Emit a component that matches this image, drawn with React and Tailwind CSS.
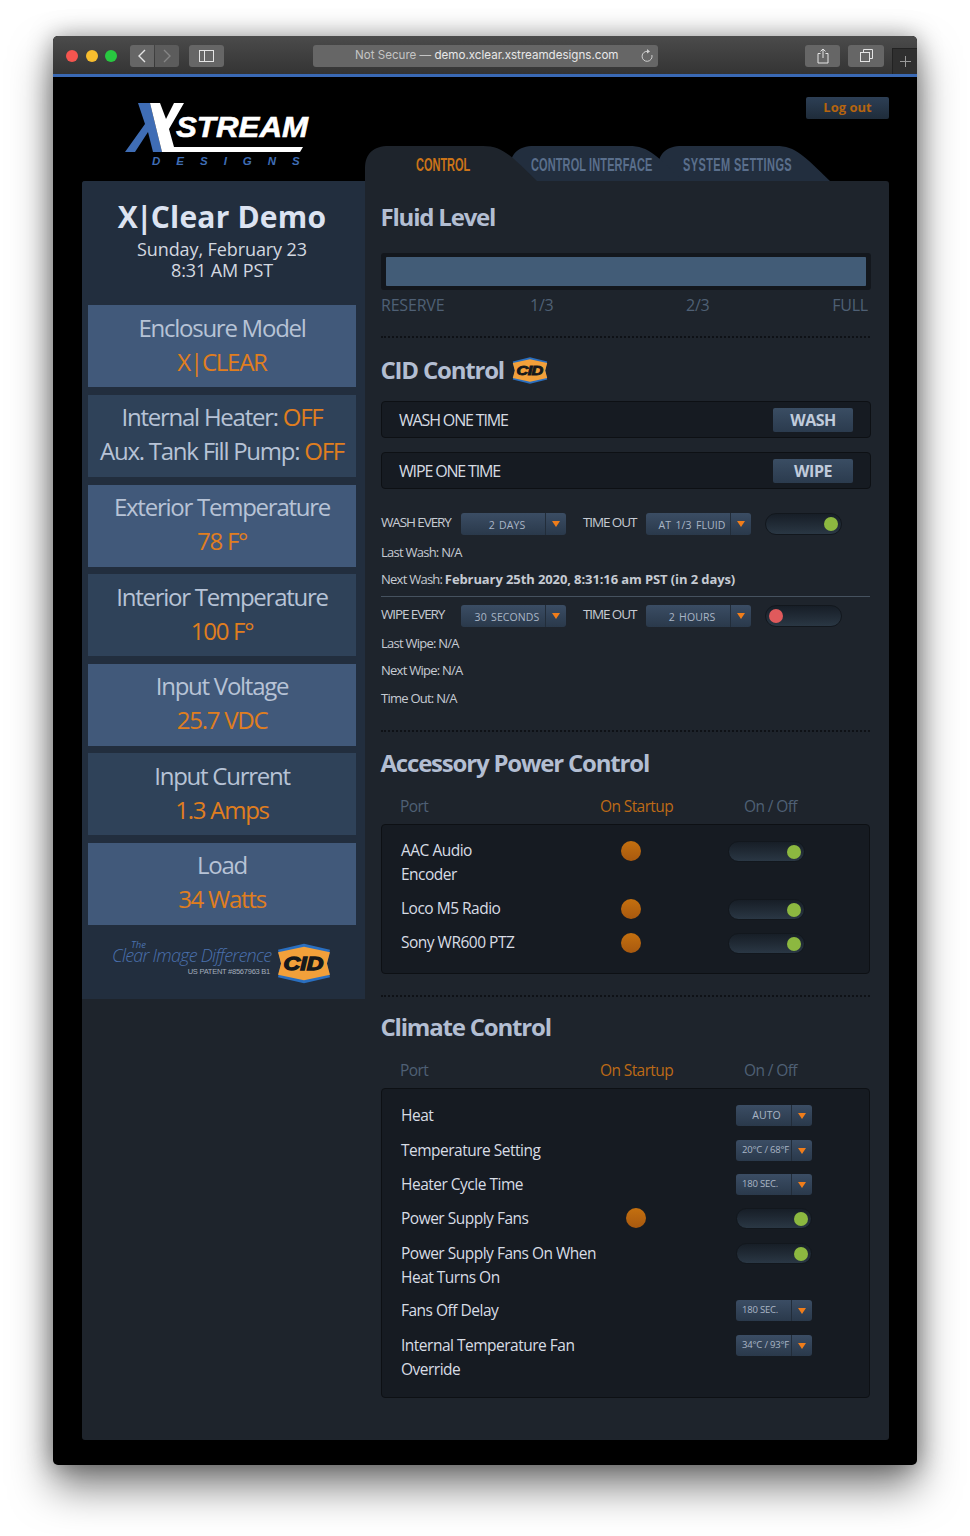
import React from 'react';

// little orange CID badge, used in the heading and in the sidebar footer
function CidBadge({ className }) {
  return (
    <svg viewBox="0 0 106 80" className={className}>
      <path d="M2 13 L53 1 L104 13 L98 40 L104 67 L53 79 L2 67 L8 40 Z" fill="#2a6fc0" />
      <path d="M2 18 L53 7 L104 18 L98 40 L104 62 L53 73 L2 62 L8 40 Z" fill="#f2a03a" />
      <text x="52" y="53" textAnchor="middle" fontFamily="'Liberation Sans',sans-serif" fontWeight="700" fontStyle="italic" fontSize="36" fill="#15181c" stroke="#15181c" strokeWidth="2.5" textLength="78" lengthAdjust="spacingAndGlyphs">CID</text>
    </svg>
  );
}

function Logo() {
  return (
    <svg width="200" height="68" viewBox="0 0 200 68" className="block">
      <path d="M14 1 L26 1 L38 50 L29 50 L24 30 L11 50 L1 50 L21 22 Z" fill="#3f6db5" />
      <path d="M26 1 L36 1 L42 17 L50 1 L60 1 L45 27 L50 45 L179 45 L176 50 L38 50 Z" fill="#ffffff" />
      <text x="52" y="35" fontFamily="'Liberation Sans',sans-serif" fontWeight="700" fontStyle="italic" fontSize="30" fill="#ffffff" stroke="#ffffff" strokeWidth="0.6" textLength="132" lengthAdjust="spacingAndGlyphs">STREAM</text>
      <text x="28" y="63" fontFamily="'Liberation Sans',sans-serif" fontWeight="700" fontStyle="italic" fontSize="11.5" fill="#3f6db5" letterSpacing="16">DESIGNS</text>
    </svg>
  );
}

function Chrome() {
  return (
    <div className="relative h-[38px] shrink-0 bg-gradient-to-b from-[#4b4b4b] to-[#343434] rounded-t-[5px] flex items-center">
      <div className="ml-[13px] flex gap-[7.5px] mt-[1px]">
        <div className="w-3 h-3 rounded-full bg-[#f5554f]" />
        <div className="w-3 h-3 rounded-full bg-[#f7bd2e]" />
        <div className="w-3 h-3 rounded-full bg-[#28c840]" />
      </div>
      <div className="ml-[13px] flex gap-[1px] mt-[1px]">
        <div className="w-6 h-[22px] rounded-l-[3px] bg-[#666666] flex items-center justify-center">
          <svg width="10" height="14" viewBox="0 0 10 14" fill="none" stroke="#e4e4e4" strokeWidth="1.4"><path d="M8 1 L2 7 L8 13" /></svg>
        </div>
        <div className="w-6 h-[22px] rounded-r-[3px] bg-[#5c5c5c] flex items-center justify-center">
          <svg width="10" height="14" viewBox="0 0 10 14" fill="none" stroke="#858585" strokeWidth="1.4"><path d="M2 1 L8 7 L2 13" /></svg>
        </div>
      </div>
      <div className="ml-[10px] w-[35px] h-[22px] mt-[1px] rounded-[3px] bg-[#666666] flex items-center justify-center">
        <svg width="16" height="12" viewBox="0 0 16 12" fill="none" stroke="#e4e4e4"><rect x="0.5" y="0.5" width="14" height="11" /><path d="M5.5 0.5 V11.5" /></svg>
      </div>
      <div className="ml-[89px] w-[345px] h-[22px] mt-[1px] rounded-[3px] bg-[#666666] flex items-center relative">
        <span className="ml-[42px] mt-[1px] text-[11.6px] text-[#c4c4c4] font-['Inter',sans-serif] whitespace-nowrap">
          Not Secure — <span className="text-[#e8e8e8]">demo.xclear.xstreamdesigns.com</span>
        </span>
        <svg width="14" height="14" viewBox="0 0 14 14" fill="none" stroke="#d0d0d0" strokeWidth="1" className="absolute right-[4px] top-[4px]">
          <path d="M8 2.4 A5 5 0 1 0 11.9 6" /><path d="M7 0 L10 2.4 L7 4.6 Z" fill="#d0d0d0" stroke="none" />
        </svg>
      </div>
      <div className="ml-[147px] w-[35px] h-[22px] mt-[1px] rounded-[3px] bg-[#666666] flex items-center justify-center">
        <svg width="12" height="16" viewBox="0 0 12 16" fill="none" stroke="#e4e4e4"><path d="M3.5 5.5 H1 V15 H11 V5.5 H8.5" /><path d="M6 10 V1 M3.5 3.4 L6 1 L8.5 3.4" /></svg>
      </div>
      <div className="ml-[8px] w-[36px] h-[22px] mt-[1px] rounded-[3px] bg-[#666666] flex items-center justify-center">
        <svg width="13" height="13" viewBox="0 0 13 13" fill="none" stroke="#e4e4e4"><rect x="0.5" y="3.5" width="9" height="9" /><path d="M3.5 3.5 V0.5 H12.5 V9.5 H9.5" /></svg>
      </div>
      <div className="absolute right-0 bottom-0 w-[25px] h-[26px] bg-[#2f2f2f] border-l border-t border-[#222222] flex items-center justify-center">
        <svg width="11" height="11" viewBox="0 0 11 11" stroke="#9a9a9a"><path d="M5.5 0 V11 M0 5.5 H11" /></svg>
      </div>
    </div>
  );
}

function Tab({ w, fill, label, color, pl, z, className = '' }) {
  return (
    <div className={`relative h-[35px] ${z} ${className}`} style={{ width: w }}>
      <svg width={w} height="35" viewBox={`0 0 ${w} 35`} className="absolute inset-0">
        <path d={`M0 35 V22 C0 8 8 0 24 0 H${w - 54} C${w - 34} 0 ${w - 26} 10 ${w} 35 Z`} fill={fill} />
      </svg>
      <span
        className={`absolute top-[9px] origin-left scale-x-[0.61] font-['Liberation_Sans',sans-serif] font-bold text-[18px] leading-5 whitespace-nowrap ${color}`}
        style={{ left: pl }}
      >
        {label}
      </span>
    </div>
  );
}

function StatCard({ tone, children }) {
  return (
    <div className={`h-[82px] pb-[3px] flex flex-col items-center justify-center text-[24px] font-medium leading-[34px] tracking-[-1.25px] text-[#b7c3d6] whitespace-nowrap ${tone}`}>
      {children}
    </div>
  );
}

const LIGHT = 'bg-[#41597a]';
const DARK = 'bg-[#2f4259]';

function Sidebar() {
  return (
    <div className="w-[283px] h-[818px] bg-[#222e3e] rounded-tl-[3px] pl-[6px] pr-[9px] shrink-0">
      <div className="h-[124.4px] pt-[19px] text-center">
        <div className="text-[30px] leading-[34px] font-bold tracking-[0.2px] text-[#dce3f1]">X<span className="-mx-[2px]">|</span>Clear Demo</div>
        <div className="text-[18px] leading-[21px] mt-[5px] text-[#d3d8e0] tracking-[-0.1px]">Sunday, February 23</div>
        <div className="text-[18px] leading-[20px] text-[#d3d8e0] tracking-[-0.1px]">8:31 AM PST</div>
      </div>
      <div className="flex flex-col gap-[7.6px]">
        <StatCard tone={LIGHT}>
          <div>Enclosure Model</div>
          <div className="text-[#e07e1e]">X|CLEAR</div>
        </StatCard>
        <StatCard tone={DARK}>
          <div>Internal Heater: <span className="text-[#e07e1e]">OFF</span></div>
          <div>Aux. Tank Fill Pump: <span className="text-[#e07e1e]">OFF</span></div>
        </StatCard>
        <StatCard tone={LIGHT}>
          <div>Exterior Temperature</div>
          <div className="text-[#e07e1e]">78 F°</div>
        </StatCard>
        <StatCard tone={DARK}>
          <div>Interior Temperature</div>
          <div className="text-[#e07e1e]">100 F°</div>
        </StatCard>
        <StatCard tone={LIGHT}>
          <div>Input Voltage</div>
          <div className="text-[#e07e1e]">25.7 VDC</div>
        </StatCard>
        <StatCard tone={DARK}>
          <div>Input Current</div>
          <div className="text-[#e07e1e]">1.3 Amps</div>
        </StatCard>
        <StatCard tone={LIGHT}>
          <div>Load</div>
          <div className="text-[#e07e1e]">34 Watts</div>
        </StatCard>
      </div>
      <div className="mt-[16px] ml-[24px] flex items-start">
        <div className="w-[160px]">
          <div className="text-[9.5px] leading-[8px] italic text-[#4a70ad] pl-[19px]">The</div>
          <div className="text-[18px] leading-[12px] italic font-light tracking-[-0.75px] text-[#4a70ad] whitespace-nowrap">Clear Image Difference</div>
          <div className="text-[7.5px] leading-[10px] mt-[6px] pr-[2px] tracking-[-0.25px] text-right text-[#a3adbc] font-['Liberation_Sans',sans-serif] whitespace-nowrap">US PATENT #8567963 B1</div>
        </div>
        <CidBadge className="w-[54px] h-[41px] ml-[5px] mt-[2px]" />
      </div>
    </div>
  );
}

function SectionTitle({ children }) {
  return <h2 className="h-[34px] -ml-[0.5px] flex items-center text-[24px] font-bold tracking-[-1.2px] text-[#b3bed2] whitespace-nowrap">{children}</h2>;
}

function Dots({ className }) {
  return <div className={`border-t-2 border-dotted border-[#0e1116] ${className}`} />;
}

function ActionRow({ label, action, className = '' }) {
  return (
    <div className={`h-[37px] flex items-center justify-between bg-[#161b22] border border-[#0d1014] rounded-[4px] pl-[17px] pr-[17px] ${className}`}>
      <span className="text-[16px] tracking-[-1.15px] text-[#d6dbe3]">{label}</span>
      <div className="w-[80px] h-[24px] rounded-[2px] bg-gradient-to-b from-[#3a4d63] to-[#2b3b4e] flex items-center justify-center text-[16px] font-bold tracking-[-0.5px] text-[#c0cbdb]">{action}</div>
    </div>
  );
}

function Select({ value, w = 105, small, left, tall, pad = 'pl-[8px]' }) {
  return (
    <div className={`flex rounded-[3px] bg-gradient-to-b from-[#3b4d64] to-[#2a394b] shrink-0 tracking-normal ${tall ? 'h-[22px]' : 'h-[21px]'}`} style={{ width: w }}>
      <div
        className={`flex-1 flex items-center whitespace-nowrap text-[#aab6c6] ${small ? 'text-[9.5px] tracking-[-0.2px]' : 'text-[10.5px] tracking-[0.1px] [word-spacing:1.5px]'} ${left ? 'justify-start pl-[6px]' : `justify-center ${pad}`} ${tall ? 'pt-[3px]' : ''}`}
      >
        {value}
      </div>
      <div className="w-[21px] border-l border-[#222d3a] flex items-center justify-center">
        <div className="w-0 h-0 border-l-[4px] border-r-[4px] border-t-[6px] border-l-transparent border-r-transparent border-t-[#f07d1a]" />
      </div>
    </div>
  );
}

function Toggle({ on = true, w = 77, tall, className = '' }) {
  return (
    <div
      className={`rounded-full bg-gradient-to-b from-[#171e27] to-[#2a3744] border border-[#12171d] flex items-center px-[3px] shrink-0 ${tall ? 'h-[22px]' : 'h-[21px]'} ${on ? 'justify-end' : 'justify-start'} ${className}`}
      style={{ width: w }}
    >
      <div className={`w-[14px] h-[14px] rounded-full ${on ? 'bg-[#8cb840]' : 'bg-[#e05a5c]'}`} />
    </div>
  );
}

function StartupDot({ className }) {
  return <div className={`w-[20px] h-[20px] rounded-full bg-gradient-to-b from-[#c4700f] to-[#a8590f] shrink-0 ${className}`} />;
}

function Note({ className, children }) {
  return <div className={`h-[20px] flex items-center text-[13px] tracking-[-0.75px] text-[#c6cbd3] whitespace-nowrap ${className}`}>{children}</div>;
}

function ScheduleRow({ label, sel, out, on, className = '' }) {
  return (
    <div className={`h-[22px] flex items-center text-[13.5px] tracking-[-1.1px] text-[#c6cbd3] ${className}`}>
      <span className="w-[80px] -mt-[3px] whitespace-nowrap">{label}</span>
      <Select value={sel} tall />
      <span className="ml-[17px] w-[63px] -mt-[3px] whitespace-nowrap">TIME OUT</span>
      <Select value={out} tall />
      <Toggle on={on} tall className="ml-[14px]" />
    </div>
  );
}

function PortHeader({ className }) {
  return (
    <div className={`h-[20px] flex items-center text-[15.5px] tracking-[-0.6px] text-[#4f6075] ${className}`}>
      <span className="ml-[19px] w-[200px]">Port</span>
      <span className="w-[144px] text-[#bd6a16]">On Startup</span>
      <span>On / Off</span>
    </div>
  );
}

const rowText = 'text-[15.5px] font-medium leading-[24px] tracking-[-0.5px] text-[#d8dde5]';

function AccessoryRow({ label, className = '' }) {
  return (
    <div className={`flex items-start ${className}`}>
      <div className={`w-[220px] ${rowText}`}>{label}</div>
      <StartupDot className="mt-[3px]" />
      <Toggle className="ml-[87px] mt-[3px]" />
    </div>
  );
}

function ClimateRow({ label, dot, children, className = '' }) {
  return (
    <div className={`flex items-start ${className}`}>
      <div className={`w-[225px] ${rowText}`}>{label}</div>
      <div className="w-[110px] shrink-0">{dot && <StartupDot className="mt-[2px]" />}</div>
      <div className="mt-[2px]">{children}</div>
    </div>
  );
}

function ClimateSelect({ value, plain }) {
  return <Select value={value} w={76} small={!plain} left={!plain} pad="pl-[6px]" />;
}

function MainPanel() {
  return (
    <div className="w-[524px] pl-[16px] pr-[18px] pt-[19px]">
      <SectionTitle>Fluid Level</SectionTitle>
      <div className="mt-[19px] h-[37px] border-x-[5px] border-y-[4px] border-[#13171d] rounded-[3px]">
        <div className="h-full bg-[#425c77] rounded-[1px]" />
      </div>
      <div className="mt-[3px] h-[20px] relative flex justify-between pr-[3px] text-[16px] text-[#4f6075] tracking-[-0.2px]">
        <span>RESERVE</span>
        <span className="absolute left-[149px]">1/3</span>
        <span className="absolute left-[305px]">2/3</span>
        <span>FULL</span>
      </div>
      <Dots className="mt-[23px] mr-[1px]" />
      <div className="mt-[15px]">
        <SectionTitle>
          CID Control
          <CidBadge className="w-[36px] h-[27px] ml-[8px] mt-[1px]" />
        </SectionTitle>
      </div>
      <ActionRow label="WASH ONE TIME" action="WASH" className="mt-[14px]" />
      <ActionRow label="WIPE ONE TIME" action="WIPE" className="mt-[14px]" />

      <ScheduleRow label="WASH EVERY" sel="2 DAYS" out="AT 1/3 FLUID" on className="mt-[24px]" />
      <Note className="mt-[8px]">Last Wash: N/A</Note>
      <Note className="mt-[7px]">Next Wash:&nbsp;<b className="font-bold tracking-[-0.1px]">February 25th 2020, 8:31:16 am PST (in 2 days)</b></Note>
      <div className="mt-[6px] mr-[1px] h-[1px] bg-[#46525f]" />
      <ScheduleRow label="WIPE EVERY" sel="30 SECONDS" out="2 HOURS" on={false} className="mt-[8px]" />
      <Note className="mt-[7px]">Last Wipe: N/A</Note>
      <Note className="mt-[7px]">Next Wipe: N/A</Note>
      <Note className="mt-[8px]">Time Out: N/A</Note>
      <Dots className="mt-[21px] mr-[1px]" />

      <div className="mt-[14px]"><SectionTitle>Accessory Power Control</SectionTitle></div>
      <PortHeader className="mt-[17px]" />
      <div className="mt-[7px] mr-[1px] h-[150px] bg-[#161b22] border border-[#0d1014] rounded-[4px] pl-[19px] pt-[13px]">
        <AccessoryRow label={<>AAC Audio<br />Encoder</>} />
        <AccessoryRow label="Loco M5 Radio" className="mt-[10px]" />
        <AccessoryRow label="Sony WR600 PTZ" className="mt-[10px]" />
      </div>
      <Dots className="mt-[21px] mr-[1px]" />

      <div className="mt-[13px]"><SectionTitle>Climate Control</SectionTitle></div>
      <PortHeader className="mt-[17px]" />
      <div className="mt-[7px] mr-[1px] h-[310px] bg-[#161b22] border border-[#0d1014] rounded-[4px] pl-[19px] pt-[14px]">
        <ClimateRow label="Heat"><ClimateSelect value="AUTO" plain /></ClimateRow>
        <ClimateRow label="Temperature Setting" className="mt-[11px]"><ClimateSelect value="20°C / 68°F" /></ClimateRow>
        <ClimateRow label="Heater Cycle Time" className="mt-[10px]"><ClimateSelect value="180 SEC." /></ClimateRow>
        <ClimateRow label="Power Supply Fans" dot className="mt-[10px]"><Toggle w={76} /></ClimateRow>
        <ClimateRow label={<>Power Supply Fans On When<br />Heat Turns On</>} className="mt-[11px]"><Toggle w={76} /></ClimateRow>
        <ClimateRow label="Fans Off Delay" className="mt-[9px]"><ClimateSelect value="180 SEC." /></ClimateRow>
        <ClimateRow label={<>Internal Temperature Fan<br />Override</>} className="mt-[11px]"><ClimateSelect value="34°C / 93°F" /></ClimateRow>
      </div>
    </div>
  );
}

export default function App() {
  return (
    <div className="w-[970px] h-[1536px] bg-white pt-[36px] overflow-hidden font-['Open_Sans',sans-serif]">
      <div className="ml-[53px] w-[864px] h-[1429px] bg-black rounded-[5px] flex flex-col shadow-[0_22px_42px_rgba(0,0,0,0.5),0_0_24px_rgba(0,0,0,0.35)]">
        <Chrome />
        <div className="h-[3px] bg-[#3a69b4] shrink-0" />
        <div className="flex-1 pl-[29px] pr-[28px]">
          <div className="relative h-[104px]">
            <div className="absolute left-[42px] top-[25px]"><Logo /></div>
            <div className="absolute right-0 top-[20px] w-[83px] h-[22px] rounded-[2px] bg-gradient-to-b from-[#2d3f55] to-[#1f2c3a] flex items-center justify-center text-[13px] font-bold text-[#b5640f]">Log out</div>
            <div className="absolute left-[283px] bottom-0 flex items-end">
              <Tab w={172} fill="#1e242c" label="CONTROL" color="text-[#cc7418]" pl={51} z="z-30" />
              <Tab w={173} fill="#222e3e" label="CONTROL INTERFACE" color="text-[#5a6f8c] tracking-[0.2px]" pl={21} z="z-20" className="-ml-[27px]" />
              <Tab w={172} fill="#222e3e" label="SYSTEM SETTINGS" color="text-[#5a6f8c] tracking-[0.65px]" pl={25} z="z-10" className="-ml-[25px]" />
            </div>
          </div>
          <div className="flex items-start h-[1259px] bg-[#1e242c] rounded-[3px]">
            <Sidebar />
            <MainPanel />
          </div>
        </div>
      </div>
    </div>
  );
}
